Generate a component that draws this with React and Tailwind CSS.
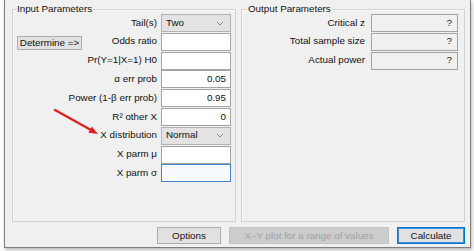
import React from 'react'

const font = { fontFamily: '"Liberation Sans", Arial, sans-serif' }

function Chevron() {
  return (
    <svg width="8" height="5" viewBox="0 0 8 5" className="shrink-0">
      <polyline points="1,1 4,4 7,1" fill="none" stroke="#8a8a8a" strokeWidth="1" />
    </svg>
  )
}

function Combo({ value }) {
  return (
    <div className="w-[70px] h-[18px] flex items-center justify-between pl-[4px] pr-[6px] bg-[#e3e3e3] border border-[#b3b3b3]">
      <span>{value}</span>
      <Chevron />
    </div>
  )
}

function Field({ value, focused }) {
  return (
    <div
      className={
        'w-[70px] h-[18px] flex items-center justify-end pr-[4px] border ' +
        (focused ? 'border-[#3d8ad0] bg-[#f7fbff]' : 'border-[#a3a3a3] bg-white')
      }
    >
      {value}
    </div>
  )
}

function InputRow({ label, children, left }) {
  return (
    <div className="h-[18.8px] flex items-start px-[4px]">
      <div className="flex-1 flex items-center h-[18px]">{left}</div>
      <div className="h-[18px] flex items-center mr-[4px] whitespace-nowrap">{label}</div>
      {children}
    </div>
  )
}

function OutputRow({ label }) {
  return (
    <div className="h-[18.8px] flex items-start justify-end pr-[6px]">
      <div className="h-[18px] flex items-center mr-[6px] whitespace-nowrap">{label}</div>
      <div className="w-[87px] h-[18px] flex items-center justify-end pr-[5px] bg-[#f0f0f0] border border-[#a3a3a3]">
        ?
      </div>
    </div>
  )
}

export default function App() {
  return (
    <div className="relative w-[474px] h-[251px] bg-[#fbfbfb] overflow-hidden text-[9.8px] text-[#111]" style={font}>
      <div className="ml-[4px] w-[467px] h-[248px] flex flex-col bg-[#f0f0f0] border-x border-b border-[#7d7d7d] shadow-[1px_2px_3px_rgba(0,0,0,0.25)] pl-[7px] pr-[4px] pt-[4px]">
        <div className="flex gap-[5px]">
          <fieldset className="w-[224px] h-[218px] border border-[#d3d3d3] shadow-[inset_1px_1px_0_#fafafa]">
            <legend className="ml-[3px] px-[1px] leading-[10px]">Input Parameters</legend>
            <InputRow label="Tail(s)">
              <Combo value="Two" />
            </InputRow>
            <InputRow
              label="Odds ratio"
              left={
                <button className="w-[65px] h-[14px] mt-[3px] flex items-center justify-center bg-[#e1e1e1] border border-[#adadad] leading-none">
                  Determine =&gt;
                </button>
              }
            >
              <Field value="" />
            </InputRow>
            <InputRow label="Pr(Y=1|X=1) H0">
              <Field value="" />
            </InputRow>
            <InputRow label="α err prob">
              <Field value="0.05" />
            </InputRow>
            <InputRow label="Power (1-β err prob)">
              <Field value="0.95" />
            </InputRow>
            <InputRow label="R² other X">
              <Field value="0" />
            </InputRow>
            <InputRow label="X distribution">
              <Combo value="Normal" />
            </InputRow>
            <InputRow label="X parm μ">
              <Field value="" />
            </InputRow>
            <InputRow label="X parm σ">
              <Field value="" focused />
            </InputRow>
          </fieldset>
          <fieldset className="w-[224px] h-[218px] border border-[#d3d3d3] shadow-[inset_1px_1px_0_#fafafa]">
            <legend className="ml-[5px] px-[1px] leading-[10px]">Output Parameters</legend>
            <OutputRow label="Critical z" />
            <OutputRow label="Total sample size" />
            <OutputRow label="Actual power" />
          </fieldset>
        </div>
        <div className="mt-[5px] flex justify-end gap-[8px] pr-[1px]">
          <button className="w-[64px] h-[17px] flex items-center justify-center bg-[#e1e1e1] border border-[#adadad] leading-none">
            Options
          </button>
          <button className="w-[160px] h-[17px] flex items-center justify-center bg-[#cccccc] border border-[#c4c4c4] text-[#a2a2a2] leading-none">
            X–Y plot for a range of values
          </button>
          <button className="w-[68px] h-[17px] flex items-center justify-center bg-[#e1e1e1] border border-[#0078d7] shadow-[inset_0_0_0_1px_#3c8fd6] leading-none">
            Calculate
          </button>
        </div>
      </div>
      <svg className="absolute left-0 top-0 pointer-events-none" width="474" height="251">
        <line x1="55" y1="110" x2="91" y2="130" stroke="#e0211c" strokeWidth="2.4" strokeLinecap="round" />
        <polygon points="98,134 88.4,132.7 91.8,126.5" fill="#e0211c" />
      </svg>
    </div>
  )
}
